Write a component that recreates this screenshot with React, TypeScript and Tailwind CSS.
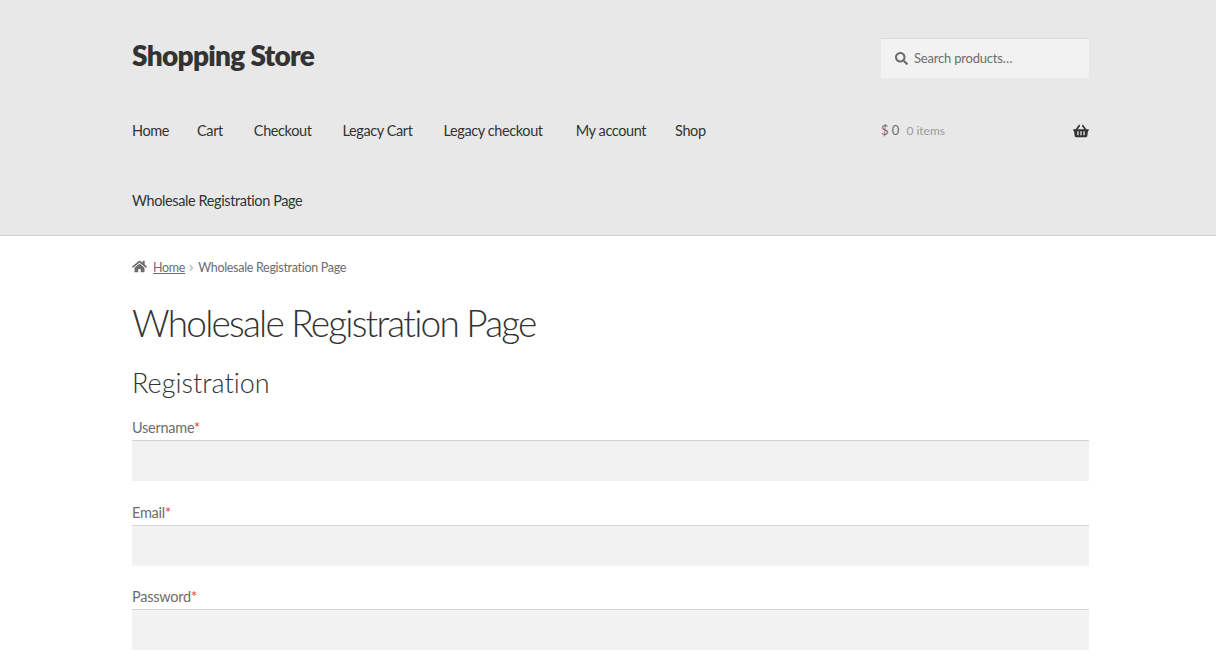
import { FaHome, FaSearch, FaShoppingBasket, FaAngleRight } from "react-icons/fa"

const navItems = [
  { name: "Home", className: "mr-[-3px]" },
  { name: "Cart", className: "" },
  { name: "Checkout", className: "" },
  { name: "Legacy Cart", className: "" },
  { name: "Legacy checkout", className: "mr-[2px]" },
  { name: "My account", className: "mr-[-2px]" },
  { name: "Shop", className: "" },
]

const fields = ["Username", "Email", "Password"]

function Field({ label }: { label: string }) {
  return (
    <div className="mb-[22.5px]">
      <label className="block h-[21px] text-[14.5px] leading-[18.5px] tracking-[-0.25px] text-[#6d6d6d]">
        {label}
        <span className="text-[#e2401c]">*</span>
      </label>
      <div className="h-[41px] border-t border-[#d4d4d4] bg-[#f2f2f2]" />
    </div>
  )
}

export default function App() {
  return (
    <div className="min-h-[667px] overflow-hidden bg-white font-['Lato','Liberation_Sans',sans-serif] text-[#404040]">
      <header className="h-[236px] border-b border-[#d4d4d4] bg-[#e8e8e8]">
        <div className="ml-[132px] w-[957px]">
          <div className="flex h-[96px] items-start justify-between pt-[38px]">
            <h1 className="text-[28px] leading-[35px] font-extrabold tracking-[-0.7px] text-[#333333]">Shopping Store</h1>
            <div className="flex h-[40px] w-[208px] items-center border-t border-[#d9d9d9] bg-[#f2f2f2] pl-[14px] text-[#6d6d6d]">
              <FaSearch className="h-[13px] w-[13px]" />
              <span className="ml-[6px] text-[13px] tracking-[-0.2px]">Search products…</span>
            </div>
          </div>
          <div className="flex h-[70px] items-center justify-between">
            <nav className="flex gap-[31px] text-[14.5px] tracking-[-0.4px] text-[#333333]">
              {navItems.map((item) => (
                <a key={item.name} className={item.className}>
                  {item.name}
                </a>
              ))}
            </nav>
            <div className="flex w-[208px] items-center justify-between">
              <div className="flex items-baseline">
                <span className="text-[13px] text-[#6d6d6d]">$ 0</span>
                <span className="ml-[7px] text-[12px] text-[#9a9a9a]">0 items</span>
              </div>
              <FaShoppingBasket className="h-[14px] w-[16px] text-[#333333]" />
            </div>
          </div>
          <div className="flex h-[70px] items-center text-[14.5px] tracking-[-0.4px] text-[#333333]">
            <a>Wholesale Registration Page</a>
          </div>
        </div>
      </header>
      <main className="ml-[132px] w-[957px]">
        <div className="flex h-[61px] items-center pt-[3px] text-[12.5px] tracking-[-0.3px] text-[#6d6d6d]">
          <FaHome className="mr-[6px] mb-[3px] h-[15px] w-[15px]" />
          <a className="underline">Home</a>
          <FaAngleRight className="mx-[3px] h-[10px] w-[7px] text-[#c4c4c4]" />
          <span>Wholesale Registration Page</span>
        </div>
        <h1 className="text-[37px] leading-[52px] font-light tracking-[-1.8px] text-[#333333]">
          Wholesale Registration Page
        </h1>
        <h2 className="mt-[17px] mb-[19px] text-[27px] leading-[34px] font-light tracking-[0.02px] text-[#333333]">Registration</h2>
        {fields.map((f) => (
          <Field key={f} label={f} />
        ))}
      </main>
    </div>
  )
}
